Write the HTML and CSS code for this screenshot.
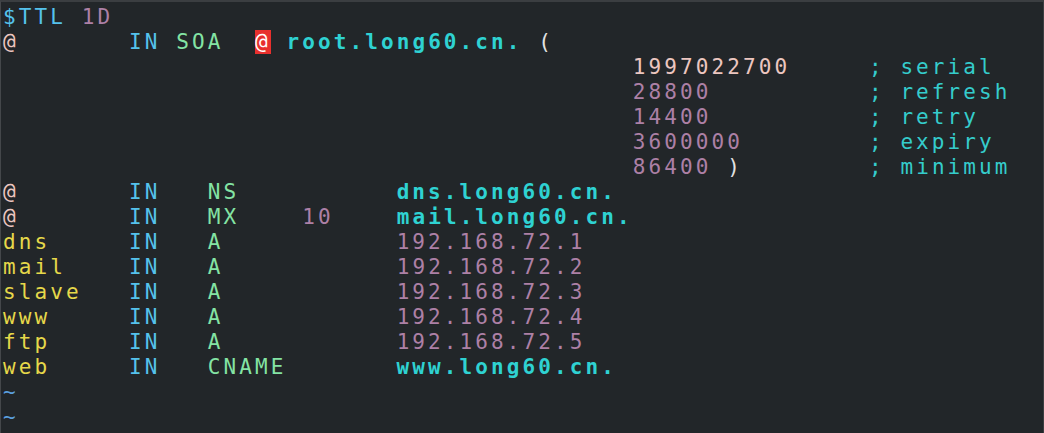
FILE: index.html
```html
<!DOCTYPE html>
<html>
<head>
<meta charset="utf-8">
<link rel="stylesheet" href="styles.css">
</head>
<body>
<div class="term">
<div class="line"><span class="kw">$TTL</span> <span class="num">1D</span></div>
<div class="line"><span class="at">@</span>       <span class="kw">IN</span> <span class="rr">SOA</span>  <span class="err">@</span> <span class="host">root.long60.cn.</span> <span class="par">(</span></div>
<div class="line">                                        <span class="at">1997022700</span>     <span class="cmt">; serial</span></div>
<div class="line">                                        <span class="num">28800</span>          <span class="cmt">; refresh</span></div>
<div class="line">                                        <span class="num">14400</span>          <span class="cmt">; retry</span></div>
<div class="line">                                        <span class="num">3600000</span>        <span class="cmt">; expiry</span></div>
<div class="line">                                        <span class="num">86400</span> <span class="par">)</span>        <span class="cmt">; minimum</span></div>
<div class="line"><span class="at">@</span>       <span class="kw">IN</span>   <span class="rr">NS</span>          <span class="host">dns.long60.cn.</span></div>
<div class="line"><span class="at">@</span>       <span class="kw">IN</span>   <span class="rr">MX</span>    <span class="num">10</span>    <span class="host">mail.long60.cn.</span></div>
<div class="line"><span class="name">dns</span>     <span class="kw">IN</span>   <span class="rr">A</span>           <span class="num">192.168.72.1</span></div>
<div class="line"><span class="name">mail</span>    <span class="kw">IN</span>   <span class="rr">A</span>           <span class="num">192.168.72.2</span></div>
<div class="line"><span class="name">slave</span>   <span class="kw">IN</span>   <span class="rr">A</span>           <span class="num">192.168.72.3</span></div>
<div class="line"><span class="name">www</span>     <span class="kw">IN</span>   <span class="rr">A</span>           <span class="num">192.168.72.4</span></div>
<div class="line"><span class="name">ftp</span>     <span class="kw">IN</span>   <span class="rr">A</span>           <span class="num">192.168.72.5</span></div>
<div class="line"><span class="name">web</span>     <span class="kw">IN</span>   <span class="rr">CNAME</span>       <span class="host">www.long60.cn.</span></div>
<div class="line"><span class="tilde">~</span></div>
<div class="line"><span class="tilde">~</span></div>
</div>
</body>
</html>
```
FILE: styles.css
```css
html, body {
  margin: 0;
  padding: 0;
  background: #222629;
}
.term {
  box-sizing: border-box;
  width: 1044px;
  height: 433px;
  overflow: hidden;
  background: #222629;
  border-top: 2px solid #3b3e41;
  border-left: 1px solid #44474a;
  border-right: 1px solid #3b3e41;
  padding: 3px 0 0 2px;
  font-family: "DejaVu Sans Mono", monospace;
  font-size: 21px;
  letter-spacing: 3.1px;
  color: #d8d8d8;
}
.line {
  height: 25px;
  line-height: 25px;
  white-space: pre;
}
.kw { color: #55c2ec; }
.num { color: #ad80a6; }
.at { color: #ecc6c0; }
.rr { color: #84e4a4; }
.err { background: #e8302d; color: #ffffff; }
.host { color: #2fd2d2; font-weight: bold; }
.cmt { color: #35cccc; }
.name { color: #e6d84a; }
.par { color: #e2e2e2; }
.tilde { color: #5b9fdf; }
```
